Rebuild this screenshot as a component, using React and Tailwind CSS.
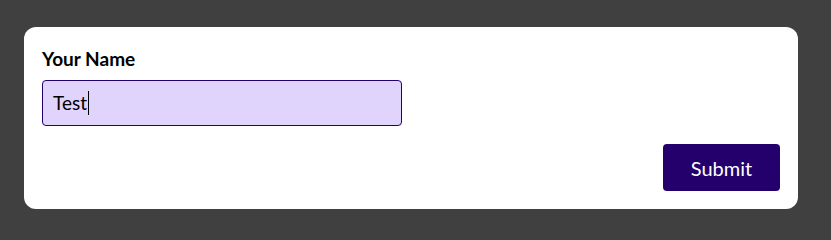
import React from 'react';

const App = () => {
  return (
    <div
      className="min-h-[240px] w-full bg-[#404040] pt-[27px] pl-[24px]"
      style={{ fontFamily: '"Source Sans Pro", Lato, "Noto Sans", sans-serif' }}
    >
      <form
        className="w-[774px] rounded-[12px] bg-white p-[18px]"
        onSubmit={(e) => e.preventDefault()}
      >
        <label className="block text-[19px] font-bold leading-[24px] text-black mt-[2px]">
          Your Name
        </label>
        <div className="mt-[9px] flex h-[46px] w-[360px] items-center rounded-[4px] border border-[#23006b] bg-[#e0d4fc] px-[10px] text-[19px] text-black">
          <span>Test</span>
          <span className="ml-[1px] h-[24px] w-px bg-black"></span>
        </div>
        <div className="mt-[18px] flex justify-end">
          <button
            type="submit"
            className="h-[47px] w-[117px] rounded-[4px] bg-[#23006b] text-[20px] text-white"
          >
            Submit
          </button>
        </div>
      </form>
    </div>
  );
};

export default App;
